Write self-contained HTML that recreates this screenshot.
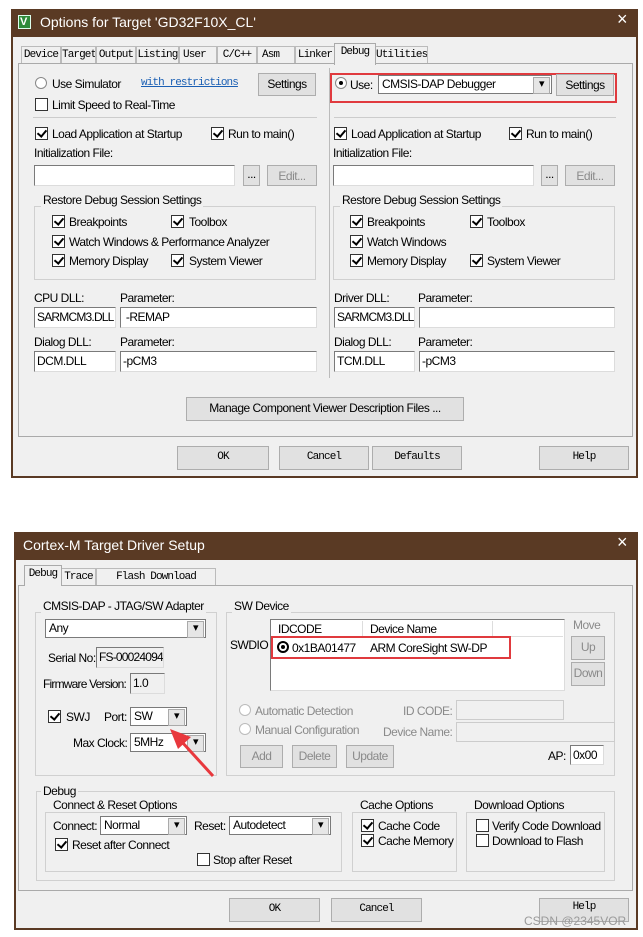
<!DOCTYPE html>
<html><head><meta charset="utf-8"><style>
*{box-sizing:border-box;margin:0;padding:0}
body{width:643px;height:937px;background:#fff;position:relative;overflow:hidden;font-family:"Liberation Sans",Arial,sans-serif;font-size:12px;color:#000;letter-spacing:-0.5px}
div,span{position:absolute}
.win{background:#f0f0f0;border:2px solid #5a3a24}
.tb{background:#5a3a24;color:#fff;font-size:14px;letter-spacing:0;padding-left:0}
.t{white-space:nowrap;line-height:14px}
.g{color:#8a8a8a}
.in{background:#fff;border:1px solid #7a7a7a;border-right-color:#dcdcdc;border-bottom-color:#dcdcdc;padding:2px 2px;white-space:nowrap;line-height:14px;overflow:hidden}
.ro{background:#f0f0f0}
.btn{background:#e1e1e1;border:1px solid #adadad;text-align:center;white-space:nowrap;line-height:20px}
.mono{font-family:"Liberation Mono","Liberation Serif",monospace;font-size:11px;letter-spacing:-0.9px}
.cb{width:13px;height:13px;background:#fff;border:1px solid #333}
.cb.c::after{content:"";position:absolute;left:3px;top:0px;width:4px;height:7px;border:solid #000;border-width:0 2px 2px 0;transform:rotate(40deg)}
.rd{width:12px;height:12px;border-radius:50%;background:#fff;border:1px solid #888}
.rd.c::after{content:"";position:absolute;left:3px;top:3px;width:4px;height:4px;border-radius:50%;background:#000}
.grp{border:1px solid #d0d0d0}
.lg{background:#f0f0f0;padding:0 2px;white-space:nowrap;line-height:14px}
.sel{background:#fff;border:1px solid #7a7a7a;padding:1px 3px;line-height:15px;white-space:nowrap}
.sel::after{content:"▾";position:absolute;right:1px;top:1px;width:15px;height:15px;background:#e6e6e6;border:1px solid #aaa;font-size:11px;text-align:center;line-height:13px}
.tab{border:1px solid #bbb;border-bottom:none;background:#f0f0f0;text-align:center;line-height:17px;white-space:nowrap;overflow:hidden}
</style></head><body>

<!-- ============ WINDOW 1 ============ -->
<div class="win" style="left:11px;top:9px;width:627px;height:469px"></div>
<div class="tb" style="left:11px;top:9px;width:627px;height:28px"></div>
<div style="left:18px;top:15px;width:13px;height:14px;background:#2f8a3a;border:1px solid #dfe"></div>
<div class="t" style="left:20px;top:15px;color:#fff;font-weight:bold;font-size:11px">V</div>
<div class="t" style="left:40px;top:15px;color:#fff;font-size:14px;letter-spacing:0">Options for Target 'GD32F10X_CL'</div>
<div class="t" style="left:617px;top:12px;color:#fff;font-size:18px;font-weight:normal">×</div>

<!-- tabs -->
<div class="tab mono" style="left:21px;top:46px;width:40px;height:18px">Device</div>
<div class="tab mono" style="left:61px;top:46px;width:35px;height:18px">Target</div>
<div class="tab mono" style="left:96px;top:46px;width:40px;height:18px">Output</div>
<div class="tab mono" style="left:136px;top:46px;width:43px;height:18px">Listing</div>
<div class="tab mono" style="left:179px;top:46px;width:38px;height:18px;text-align:left;padding-left:3px">User</div>
<div class="tab mono" style="left:217px;top:46px;width:40px;height:18px">C/C++</div>
<div class="tab mono" style="left:257px;top:46px;width:38px;height:18px;text-align:left;padding-left:4px">Asm</div>
<div class="tab mono" style="left:295px;top:46px;width:40px;height:18px">Linker</div>
<div class="tab mono" style="left:375px;top:46px;width:53px;height:18px">Utilities</div>
<div class="grp" style="left:18px;top:63px;width:615px;height:374px;border-color:#aaa;background:#f0f0f0"></div>
<div class="tab mono" style="left:334px;top:43px;width:42px;height:22px;border-color:#aaa">Debug</div>

<div style="left:329px;top:68px;width:1px;height:310px;background:#bbb"></div>
<div style="left:33px;top:117px;width:284px;height:1px;background:#ccc"></div>
<div style="left:334px;top:117px;width:282px;height:1px;background:#ccc"></div>

<!-- left top -->
<div class="rd" style="left:35px;top:77px"></div>
<div class="t" style="left:52px;top:77px">Use Simulator</div>
<div class="t mono" style="left:141px;top:76px;color:#1a5fb4;text-decoration:underline">with restrictions</div>
<div class="btn" style="left:258px;top:73px;width:58px;height:23px">Settings</div>
<div class="cb" style="left:35px;top:98px"></div>
<div class="t" style="left:52px;top:98px">Limit Speed to Real-Time</div>

<!-- right top -->
<div style="left:330px;top:73px;width:287px;height:30px;border:2px solid #e03a3e"></div>
<div class="rd c" style="left:335px;top:77px"></div>
<div class="t" style="left:350px;top:78px">Use:</div>
<div class="sel" style="left:378px;top:75px;width:174px;height:19px">CMSIS-DAP Debugger</div>
<div class="btn" style="left:556px;top:74px;width:58px;height:22px">Settings</div>

<!-- both sides -->
<div class="cb c" style="left:35px;top:127px"></div><div class="t" style="left:52px;top:127px">Load Application at Startup</div>
<div class="cb c" style="left:211px;top:127px"></div><div class="t" style="left:228px;top:127px">Run to main()</div>
<div class="cb c" style="left:334px;top:127px"></div><div class="t" style="left:351px;top:127px">Load Application at Startup</div>
<div class="cb c" style="left:509px;top:127px"></div><div class="t" style="left:526px;top:127px">Run to main()</div>
<div class="t" style="left:34px;top:146px">Initialization File:</div>
<div class="t" style="left:333px;top:146px">Initialization File:</div>
<div class="in" style="left:34px;top:165px;width:201px;height:21px"></div>
<div class="btn" style="left:243px;top:165px;width:17px;height:21px;line-height:16px">...</div>
<div class="btn g" style="left:267px;top:165px;width:50px;height:21px">Edit...</div>
<div class="in" style="left:333px;top:165px;width:201px;height:21px"></div>
<div class="btn" style="left:541px;top:165px;width:17px;height:21px;line-height:16px">...</div>
<div class="btn g" style="left:565px;top:165px;width:50px;height:21px">Edit...</div>

<div class="grp" style="left:34px;top:206px;width:282px;height:74px"></div>
<div class="lg" style="left:41px;top:193px">Restore Debug Session Settings</div>
<div class="cb c" style="left:52px;top:215px"></div><div class="t" style="left:69px;top:215px">Breakpoints</div>
<div class="cb c" style="left:171px;top:215px"></div><div class="t" style="left:189px;top:215px">Toolbox</div>
<div class="cb c" style="left:52px;top:235px"></div><div class="t" style="left:69px;top:235px">Watch Windows &amp; Performance Analyzer</div>
<div class="cb c" style="left:52px;top:254px"></div><div class="t" style="left:69px;top:254px">Memory Display</div>
<div class="cb c" style="left:171px;top:254px"></div><div class="t" style="left:189px;top:254px">System Viewer</div>

<div class="grp" style="left:333px;top:206px;width:282px;height:74px"></div>
<div class="lg" style="left:340px;top:193px">Restore Debug Session Settings</div>
<div class="cb c" style="left:350px;top:215px"></div><div class="t" style="left:367px;top:215px">Breakpoints</div>
<div class="cb c" style="left:470px;top:215px"></div><div class="t" style="left:487px;top:215px">Toolbox</div>
<div class="cb c" style="left:350px;top:235px"></div><div class="t" style="left:367px;top:235px">Watch Windows</div>
<div class="cb c" style="left:350px;top:254px"></div><div class="t" style="left:367px;top:254px">Memory Display</div>
<div class="cb c" style="left:470px;top:254px"></div><div class="t" style="left:487px;top:254px">System Viewer</div>

<div class="t" style="left:34px;top:291px">CPU DLL:</div><div class="t" style="left:120px;top:291px">Parameter:</div>
<div class="in" style="left:34px;top:307px;width:82px;height:21px;letter-spacing:-0.8px">SARMCM3.DLL</div>
<div class="in" style="left:120px;top:307px;width:197px;height:21px">&nbsp;-REMAP</div>
<div class="t" style="left:34px;top:335px">Dialog DLL:</div><div class="t" style="left:120px;top:335px">Parameter:</div>
<div class="in" style="left:34px;top:351px;width:82px;height:21px">DCM.DLL</div>
<div class="in" style="left:120px;top:351px;width:197px;height:21px">-pCM3</div>

<div class="t" style="left:334px;top:291px">Driver DLL:</div><div class="t" style="left:418px;top:291px">Parameter:</div>
<div class="in" style="left:334px;top:307px;width:81px;height:21px;letter-spacing:-0.8px">SARMCM3.DLL</div>
<div class="in" style="left:419px;top:307px;width:196px;height:21px"></div>
<div class="t" style="left:334px;top:335px">Dialog DLL:</div><div class="t" style="left:418px;top:335px">Parameter:</div>
<div class="in" style="left:334px;top:351px;width:81px;height:21px">TCM.DLL</div>
<div class="in" style="left:419px;top:351px;width:196px;height:21px">-pCM3</div>

<div class="btn" style="left:186px;top:397px;width:278px;height:24px">Manage Component Viewer Description Files ...</div>

<div class="btn mono" style="left:177px;top:446px;width:92px;height:24px">OK</div>
<div class="btn mono" style="left:279px;top:446px;width:90px;height:24px">Cancel</div>
<div class="btn mono" style="left:372px;top:446px;width:90px;height:24px">Defaults</div>
<div class="btn mono" style="left:539px;top:446px;width:90px;height:24px">Help</div>

<!-- ============ WINDOW 2 ============ -->
<div class="win" style="left:14px;top:532px;width:624px;height:398px"></div>
<div class="tb" style="left:14px;top:532px;width:624px;height:28px"></div>
<div class="t" style="left:23px;top:538px;color:#fff;font-size:14px;letter-spacing:0">Cortex-M Target Driver Setup</div>
<div class="t" style="left:617px;top:535px;color:#fff;font-size:18px">×</div>

<div class="tab mono" style="left:61px;top:568px;width:35px;height:18px">Trace</div>
<div class="tab mono" style="left:96px;top:568px;width:120px;height:18px">Flash Download</div>
<div class="grp" style="left:18px;top:585px;width:615px;height:306px;border-color:#aaa;background:#f0f0f0"></div>
<div class="tab mono" style="left:24px;top:565px;width:38px;height:21px;border-color:#aaa">Debug</div>

<div class="grp" style="left:35px;top:612px;width:182px;height:164px"></div>
<div class="lg" style="left:41px;top:599px">CMSIS-DAP - JTAG/SW Adapter</div>
<div class="sel" style="left:45px;top:619px;width:161px;height:19px">Any</div>
<div class="t" style="left:48px;top:651px">Serial No:</div>
<div class="in ro" style="left:96px;top:647px;width:68px;height:21px;letter-spacing:-0.8px">FS-00024094</div>
<div class="t" style="left:43px;top:677px;letter-spacing:-0.8px">Firmware Version:</div>
<div class="in ro" style="left:130px;top:673px;width:35px;height:21px">1.0</div>
<div class="cb c" style="left:48px;top:710px"></div><div class="t" style="left:66px;top:710px">SWJ</div>
<div class="t" style="left:104px;top:710px">Port:</div>
<div class="sel" style="left:130px;top:707px;width:57px;height:19px">SW</div>
<div class="t" style="left:73px;top:736px">Max Clock:</div>
<div class="sel" style="left:130px;top:733px;width:76px;height:19px">5MHz</div>

<div class="grp" style="left:226px;top:612px;width:389px;height:164px"></div>
<div class="lg" style="left:232px;top:599px">SW Device</div>
<div class="t" style="left:230px;top:638px">SWDIO</div>
<div class="in" style="left:270px;top:619px;width:295px;height:72px;padding:0"></div>
<div style="left:272px;top:621px;width:291px;height:16px;border-bottom:1px solid #ddd"></div>
<div style="left:362px;top:621px;width:1px;height:16px;background:#ddd"></div>
<div style="left:492px;top:621px;width:1px;height:16px;background:#ddd"></div>
<div class="t" style="left:278px;top:622px">IDCODE</div>
<div class="t" style="left:370px;top:622px">Device Name</div>
<div style="left:277px;top:641px;width:12px;height:12px;border-radius:50%;border:2px solid #000"></div>
<div style="left:281px;top:645px;width:4px;height:4px;border-radius:50%;background:#000"></div>
<div class="t" style="left:292px;top:641px">0x1BA01477</div>
<div class="t" style="left:370px;top:641px">ARM CoreSight SW-DP</div>
<div style="left:271px;top:636px;width:240px;height:23px;border:2px solid #e03a3e"></div>
<div class="t g" style="left:573px;top:618px">Move</div>
<div class="btn g" style="left:571px;top:636px;width:34px;height:24px">Up</div>
<div class="btn g" style="left:571px;top:662px;width:34px;height:24px">Down</div>

<div class="rd" style="left:239px;top:704px;border-color:#bbb"></div>
<div class="t g" style="left:255px;top:704px">Automatic Detection</div>
<div class="t g" style="left:403px;top:704px">ID CODE:</div>
<div class="in ro" style="left:456px;top:700px;width:108px;height:20px;border-color:#ccc"></div>
<div class="rd" style="left:239px;top:723px;border-color:#bbb"></div>
<div class="t g" style="left:255px;top:723px">Manual Configuration</div>
<div class="t g" style="left:383px;top:725px">Device Name:</div>
<div class="in ro" style="left:456px;top:722px;width:159px;height:20px;border-color:#ccc"></div>
<div class="btn g" style="left:240px;top:745px;width:43px;height:23px">Add</div>
<div class="btn g" style="left:292px;top:745px;width:45px;height:23px">Delete</div>
<div class="btn g" style="left:346px;top:745px;width:48px;height:23px">Update</div>
<div class="t" style="left:548px;top:749px">AP:</div>
<div class="in" style="left:570px;top:745px;width:34px;height:20px">0x00</div>

<div class="grp" style="left:36px;top:791px;width:579px;height:90px"></div>
<div class="lg" style="left:41px;top:784px">Debug</div>
<div class="grp" style="left:45px;top:812px;width:297px;height:60px"></div>
<div class="lg" style="left:51px;top:798px">Connect &amp; Reset Options</div>
<div class="t" style="left:53px;top:819px">Connect:</div>
<div class="sel" style="left:100px;top:816px;width:87px;height:19px">Normal</div>
<div class="t" style="left:194px;top:819px">Reset:</div>
<div class="sel" style="left:229px;top:816px;width:102px;height:19px">Autodetect</div>
<div class="cb c" style="left:55px;top:838px"></div><div class="t" style="left:72px;top:838px">Reset after Connect</div>
<div class="cb" style="left:197px;top:853px"></div><div class="t" style="left:213px;top:853px">Stop after Reset</div>

<div class="grp" style="left:352px;top:812px;width:105px;height:60px"></div>
<div class="lg" style="left:358px;top:798px">Cache Options</div>
<div class="cb c" style="left:361px;top:819px"></div><div class="t" style="left:378px;top:819px">Cache Code</div>
<div class="cb c" style="left:361px;top:834px"></div><div class="t" style="left:378px;top:834px">Cache Memory</div>

<div class="grp" style="left:466px;top:812px;width:139px;height:60px"></div>
<div class="lg" style="left:472px;top:798px">Download Options</div>
<div class="cb" style="left:476px;top:819px"></div><div class="t" style="left:492px;top:819px">Verify Code Download</div>
<div class="cb" style="left:476px;top:834px"></div><div class="t" style="left:492px;top:834px">Download to Flash</div>

<div class="btn mono" style="left:229px;top:898px;width:91px;height:24px">OK</div>
<div class="btn mono" style="left:331px;top:898px;width:91px;height:24px">Cancel</div>
<div class="btn mono" style="left:539px;top:898px;width:90px;height:24px;line-height:16px">Help</div>
<div class="t" style="left:524px;top:914px;color:#9a9a9a;font-size:12px;letter-spacing:0">CSDN @2345VOR</div>

<!-- red arrow -->
<svg style="position:absolute;left:0;top:0" width="643" height="937">
<line x1="213" y1="776" x2="182" y2="742" stroke="#e8383d" stroke-width="3"/>
<polygon points="170,729 191,737 178,749" fill="#e8383d"/>
</svg>
</body></html>
